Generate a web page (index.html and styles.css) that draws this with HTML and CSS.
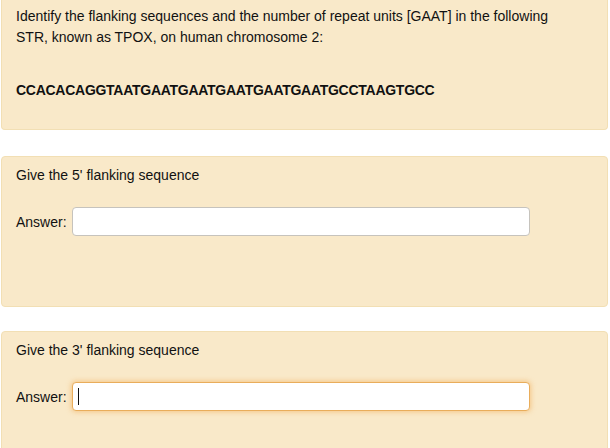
FILE: index.html
```html
<!DOCTYPE html>
<html>
<head>
<meta charset="utf-8">
<link rel="stylesheet" href="styles.css">
</head>
<body>
<div class="page">
  <div class="panel first">
    <p class="text">Identify the flanking sequences and the number of repeat units [GAAT] in the following STR, known as TPOX, on human chromosome 2:</p>
    <p class="seq">CCACACAGGTAATGAATGAATGAATGAATGAATGCCTAAGTGCC</p>
  </div>
  <div class="panel q">
    <p class="text">Give the 5' flanking sequence</p>
    <div class="answer">
      <label class="label">Answer:</label>
      <span class="field"><input class="input" type="text"></span>
    </div>
  </div>
  <div class="panel q">
    <p class="text">Give the 3' flanking sequence</p>
    <div class="answer">
      <label class="label">Answer:</label>
      <span class="field"><input class="input focused" type="text"><span class="caret"></span></span>
    </div>
  </div>
</div>
</body>
</html>
```
FILE: styles.css
```css
html, body {
  margin: 0;
  padding: 0;
  background: #ffffff;
  overflow: hidden;
}
.page {
  padding: 0 2px 0 1px;
  font-family: "Liberation Sans", Arial, Helvetica, sans-serif;
  font-size: 14px;
  color: #111;
}
.panel {
  background: #f9e9c9;
  border: 1px solid #f2dfb4;
  border-radius: 4px;
  padding: 8px 14px 0 14px;
}
.panel p {
  margin: 0;
  line-height: 21px;
}
.first {
  margin-top: -4px;
  padding-top: 10px;
  padding-bottom: 28px;
  border-top: none;
  border-top-left-radius: 0;
  border-top-right-radius: 0;
}
.first .text {
  width: 550px;
}
.seq {
  font-weight: bold;
  letter-spacing: -0.27px;
  margin-top: 32px !important;
}
.q {
  margin-top: 26px;
  height: 141px;
}
.q + .q {
  margin-top: 24px;
}
.answer {
  display: flex;
  align-items: center;
  gap: 5px;
  margin-top: 21px;
}
.label {
  line-height: 28px;
}
.field {
  position: relative;
  display: block;
}
.input {
  display: block;
  box-sizing: border-box;
  width: 458px;
  height: 29px;
  margin: 0;
  padding: 4px 6px;
  border: 1px solid #c6c3bd;
  border-radius: 4px;
  background: #fff;
  font: inherit;
  outline: none;
}
.focused {
  border-color: #e9ad5b;
  box-shadow: 0 0 5px 1px rgba(240, 170, 80, 0.55);
}
.caret {
  position: absolute;
  left: 6px;
  top: 6px;
  width: 1px;
  height: 17px;
  background: #111;
}
```
